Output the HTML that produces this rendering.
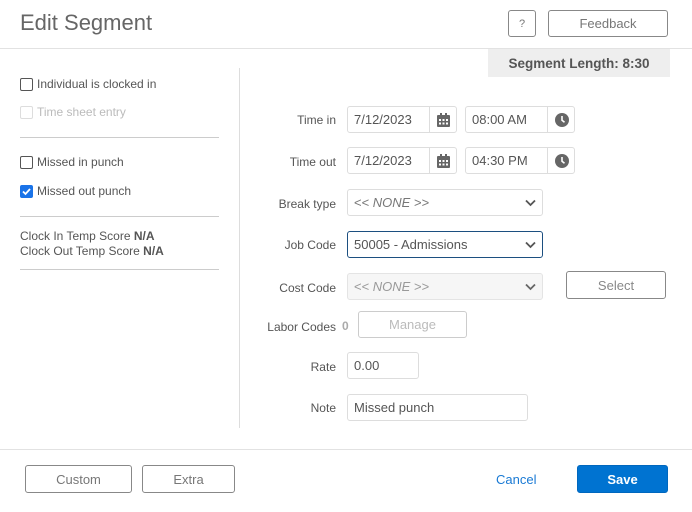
<!DOCTYPE html>
<html><head><style>
*{box-sizing:border-box;margin:0;padding:0}
body{width:692px;height:512px;background:#fff;font-family:"Liberation Sans",sans-serif;position:relative;overflow:hidden;color:#555}
.a{position:absolute}
.btn{position:absolute;border:1px solid #888;border-radius:3px;background:#fff;font-size:13px;color:#777;display:flex;align-items:center;justify-content:center}
.inp{position:absolute;border:1px solid #ddd;border-radius:3px;background:#fff;font-size:13px;color:#555;display:flex;align-items:center;padding-left:6px}
.lbl{position:absolute;font-size:12px;color:#555;text-align:right;width:120px;left:216px}
.hr{position:absolute;left:20px;width:199px;height:1px;background:#ccc}
.cb{position:absolute;left:20px;width:13px;height:13px;border:1px solid #555;border-radius:2px;background:#fff}
.ct{position:absolute;left:37px;font-size:12px;color:#555}
.ico{position:absolute;top:0;bottom:0;border-left:1px solid #ddd;display:flex;align-items:center;justify-content:center}
.chev{position:absolute;right:6px;top:50%;margin-top:-4px}
</style></head><body>
<div class="a" style="left:20px;top:10px;font-size:22px;color:#666">Edit Segment</div>
<div class="btn" style="left:508px;top:10px;width:28px;height:27px;font-size:11px">?</div>
<div class="btn" style="left:548px;top:10px;width:120px;height:27px">Feedback</div>
<div class="a" style="left:0;top:48px;width:692px;height:1px;background:#e2e2e2"></div>
<div class="a" style="left:488px;top:49px;width:182px;height:28px;background:#eee;font-size:13.5px;font-weight:bold;color:#555;display:flex;align-items:center;justify-content:center">Segment Length: 8:30</div>

<div class="a" style="left:239px;top:68px;width:1px;height:360px;background:#ddd"></div>

<div class="cb" style="top:78px"></div><div class="ct" style="top:77px">Individual is clocked in</div>
<div class="cb" style="top:106px;border-color:#ddd"></div><div class="ct" style="top:105px;color:#bbb">Time sheet entry</div>
<div class="hr" style="top:137px"></div>
<div class="cb" style="top:156px"></div><div class="ct" style="top:155px">Missed in punch</div>
<div class="cb" style="top:185px;background:#1a73e8;border-color:#1a73e8"><svg width="11" height="11" viewBox="0 0 11 11" style="position:absolute;left:0;top:0"><path d="M2 5.5l2.5 2.5 4.5-5" stroke="#fff" stroke-width="1.8" fill="none"/></svg></div><div class="ct" style="top:184px">Missed out punch</div>
<div class="hr" style="top:216px"></div>
<div class="a" style="left:20px;top:229px;font-size:12px;line-height:15px;color:#555">Clock In Temp Score <b>N/A</b><br>Clock Out Temp Score <b>N/A</b></div>
<div class="hr" style="top:269px"></div>

<div class="lbl" style="top:113px">Time in</div>
<div class="inp" style="left:347px;top:106px;width:110px;height:27px">7/12/2023<div class="ico" style="left:81px;width:28px"><svg width="13" height="14" viewBox="0 0 13 14"><rect x="0" y="2" width="13" height="12" rx="1" fill="#666"/><rect x="3" y="0" width="2" height="3" fill="#666"/><rect x="8" y="0" width="2" height="3" fill="#666"/><g fill="#fff"><rect x="2" y="6" width="2" height="2"/><rect x="5.5" y="6" width="2" height="2"/><rect x="9" y="6" width="2" height="2"/><rect x="2" y="9.5" width="2" height="2"/><rect x="5.5" y="9.5" width="2" height="2"/><rect x="9" y="9.5" width="2" height="2"/></g></svg></div></div>
<div class="inp" style="left:465px;top:106px;width:110px;height:27px">08:00 AM<div class="ico" style="left:81px;width:28px"><svg width="14" height="14" viewBox="0 0 14 14"><circle cx="7" cy="7" r="7" fill="#666"/><path d="M7 3v4.3l2.5 2" stroke="#fff" stroke-width="1.6" fill="none"/></svg></div></div>

<div class="lbl" style="top:155px">Time out</div>
<div class="inp" style="left:347px;top:147px;width:110px;height:27px">7/12/2023<div class="ico" style="left:81px;width:28px"><svg width="13" height="14" viewBox="0 0 13 14"><rect x="0" y="2" width="13" height="12" rx="1" fill="#666"/><rect x="3" y="0" width="2" height="3" fill="#666"/><rect x="8" y="0" width="2" height="3" fill="#666"/><g fill="#fff"><rect x="2" y="6" width="2" height="2"/><rect x="5.5" y="6" width="2" height="2"/><rect x="9" y="6" width="2" height="2"/><rect x="2" y="9.5" width="2" height="2"/><rect x="5.5" y="9.5" width="2" height="2"/><rect x="9" y="9.5" width="2" height="2"/></g></svg></div></div>
<div class="inp" style="left:465px;top:147px;width:110px;height:27px">04:30 PM<div class="ico" style="left:81px;width:28px"><svg width="14" height="14" viewBox="0 0 14 14"><circle cx="7" cy="7" r="7" fill="#666"/><path d="M7 3v4.3l2.5 2" stroke="#fff" stroke-width="1.6" fill="none"/></svg></div></div>

<div class="lbl" style="top:197px">Break type</div>
<div class="inp" style="left:347px;top:189px;width:196px;height:27px;color:#777"><span>&lt;&lt; <i>NONE</i> &gt;&gt;</span><svg class="chev" width="11" height="8" viewBox="0 0 11 8"><path d="M1 1.5l4.5 4.5 4.5-4.5" stroke="#555" stroke-width="1.8" fill="none"/></svg></div>

<div class="lbl" style="top:238px">Job Code</div>
<div class="inp" style="left:347px;top:231px;width:196px;height:27px;border-color:#1c4f80">50005 - Admissions<svg class="chev" width="11" height="8" viewBox="0 0 11 8"><path d="M1 1.5l4.5 4.5 4.5-4.5" stroke="#555" stroke-width="1.8" fill="none"/></svg></div>

<div class="lbl" style="top:281px">Cost Code</div>
<div class="inp" style="left:347px;top:273px;width:196px;height:27px;background:#f6f6f6;border-color:#e4e4e4;color:#999"><span>&lt;&lt; <i>NONE</i> &gt;&gt;</span><svg class="chev" width="11" height="8" viewBox="0 0 11 8"><path d="M1 1.5l4.5 4.5 4.5-4.5" stroke="#666" stroke-width="1.8" fill="none"/></svg></div>
<div class="btn" style="left:566px;top:271px;width:100px;height:28px;color:#888">Select</div>

<div class="lbl" style="top:320px;left:200px;width:136px">Labor Codes</div>
<div class="a" style="left:342px;top:319px;font-size:12px;color:#aaa;font-weight:bold">0</div>
<div class="btn" style="left:358px;top:311px;width:109px;height:27px;border-color:#ccc;color:#bbb">Manage</div>

<div class="lbl" style="top:360px">Rate</div>
<div class="inp" style="left:347px;top:352px;width:72px;height:27px">0.00</div>

<div class="lbl" style="top:401px">Note</div>
<div class="inp" style="left:347px;top:394px;width:181px;height:27px">Missed punch</div>

<div class="a" style="left:0;top:449px;width:692px;height:1px;background:#e2e2e2"></div>
<div class="btn" style="left:25px;top:465px;width:107px;height:28px">Custom</div>
<div class="btn" style="left:142px;top:465px;width:93px;height:28px">Extra</div>
<div class="a" style="left:496px;top:472px;font-size:13px;color:#1a7ad4">Cancel</div>
<div class="btn" style="left:577px;top:465px;width:91px;height:28px;background:#0073d1;border-color:#0067be;color:#fff;font-weight:bold">Save</div>
</body></html>
